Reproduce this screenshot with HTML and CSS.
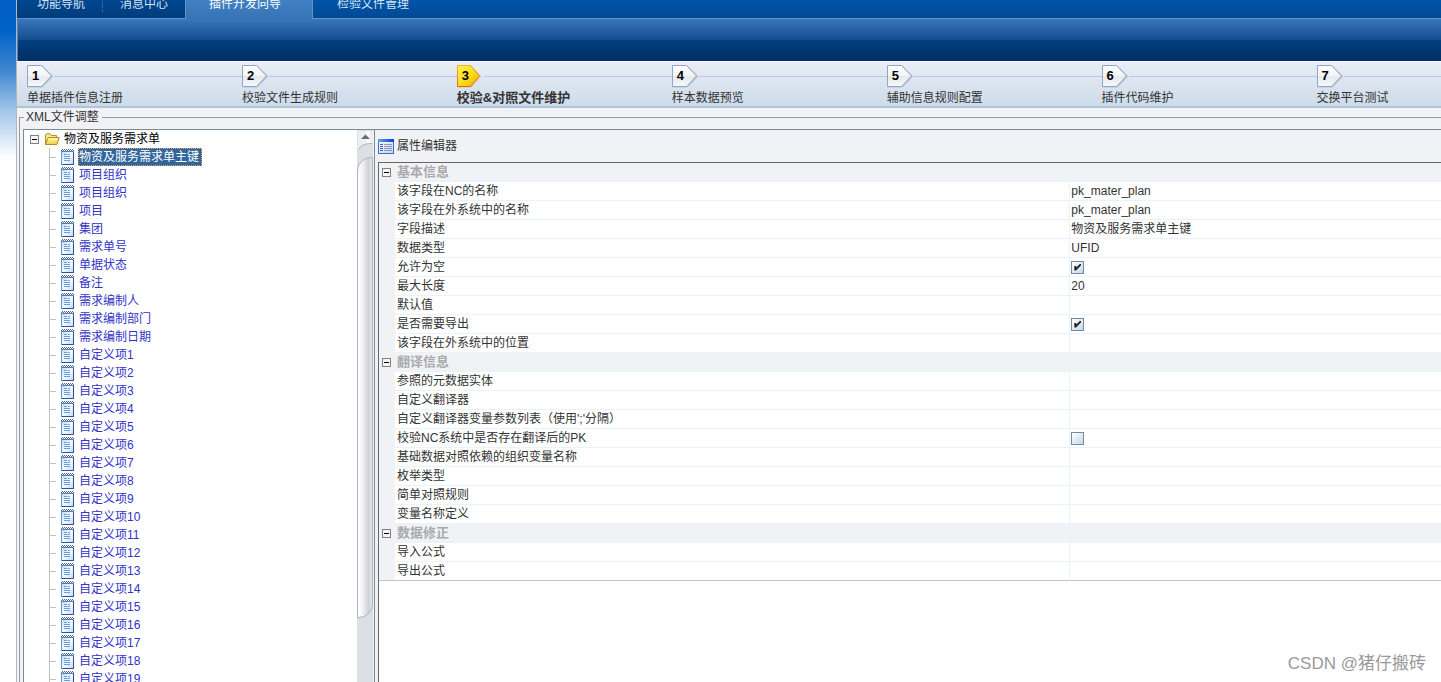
FILE: index.html
```html
<!DOCTYPE html>
<html lang="zh-CN">
<head>
<meta charset="utf-8">
<title>插件开发向导</title>
<link rel="stylesheet" href="styles.css">
</head>
<body>
<svg class="defs" aria-hidden="true">
  <defs>
    <linearGradient id="gGray" x1="0" y1="0" x2="0" y2="1"><stop offset="0" stop-color="#fff"/><stop offset=".48" stop-color="#f4f5f7"/><stop offset=".5" stop-color="#e6e8ea"/><stop offset="1" stop-color="#f6f8fa"/></linearGradient>
    <linearGradient id="gGold" x1="0" y1="0" x2="1" y2="1"><stop offset="0" stop-color="#fff34a"/><stop offset=".5" stop-color="#ffdc1e"/><stop offset="1" stop-color="#f9a800"/></linearGradient>
    <linearGradient id="gGoldEdge" x1="0" y1="0" x2="0" y2="1"><stop offset="0" stop-color="#f0b428"/><stop offset="1" stop-color="#d96a10"/></linearGradient>
    <linearGradient id="gPage" x1="0" y1="0" x2="1" y2="1"><stop offset="0" stop-color="#b8dafa"/><stop offset=".5" stop-color="#f6fbff"/><stop offset="1" stop-color="#b4dcfc"/></linearGradient>
    <linearGradient id="gFolder" x1="0" y1="0" x2="0" y2="1"><stop offset="0" stop-color="#fff6a8"/><stop offset="1" stop-color="#f2cf45"/></linearGradient>
    <linearGradient id="gTitle" x1="0" y1="0" x2="1" y2="0"><stop offset="0" stop-color="#5aa2ff"/><stop offset="1" stop-color="#0a3fd0"/></linearGradient>
    <linearGradient id="gBody" x1="0" y1="0" x2="1" y2="1"><stop offset="0" stop-color="#fff"/><stop offset="1" stop-color="#ccd0e6"/></linearGradient>
  </defs>
  <symbol id="arrow" viewBox="0 0 26 23"><path d="M1.500 1.500H15L25 11.500 15 21.500H1.500Z" fill="none" stroke="#b9c4d2" stroke-width="2"/><path d="M.5 .5H14.500L24.500 11 14.500 21.500H.5Z" fill="url(#gGray)" stroke="#8fa6c4"/></symbol>
  <symbol id="arrow-on" viewBox="0 0 26 23"><path d="M1.500 1.500H14L23 11.500 14 21.500H1.500Z" fill="none" stroke="#d9c9a8" stroke-width="2"/><path d="M.5 .5H13.500L22.500 11 13.500 21.500H.5Z" fill="url(#gGold)" stroke="url(#gGoldEdge)"/></symbol>
  <symbol id="page" viewBox="0 0 13 16">
    <rect x=".5" y="2.500" width="12" height="13" fill="url(#gPage)" stroke="#5f96dc"/>
    <path d="M12.500 3V15.500H1" fill="none" stroke="#3e4d8e"/>
    <path d="M1 .5H13M1 2.500H13" stroke="#4a6a96" stroke-dasharray="1 1"/><path d="M0 1.500H13" stroke="#4a6a96" stroke-dasharray="1 1"/>
    <path d="M3 5.500H6M7 5.500H9M3 7.500H9M3 9.500H9M3 11.500H9" stroke="#6b9bdc"/>
  </symbol>
  <symbol id="folder" viewBox="0 0 16 13">
    <path d="M1.500 11.500V2L2.500 .8H6L7.500 2.500H12.500V5" fill="#fbe98a" stroke="#b98a1c"/>
    <path d="M1.500 11.500 4.300 4.500H15.200L12.800 11.500Z" fill="url(#gFolder)" stroke="#b98a1c"/>
    <path d="M4.800 5.700H13.600" stroke="#fffbd8"/>
  </symbol>
  <symbol id="form" viewBox="0 0 16 15">
    <rect x=".5" y=".5" width="15" height="14" fill="url(#gBody)" stroke="#2f6fe0"/>
    <rect width="16" height="3" fill="url(#gTitle)"/>
    <path d="M2 5.500H5M2 7.500H5M2 9.500H5M2 11.500H5" stroke="#4a5a9c"/>
    <path d="M6 5.500H14M6 7.500H14M6 9.500H14M6 11.500H14" stroke="#8d94b4"/>
  </symbol>
</svg>

<div class="app">
  <div class="rail"></div>
  <main class="main">
    <nav class="tabs">
      <a class="tab" href="#">功能导航</a>
      <a class="tab tab-split" href="#">消息中心</a>
      <a class="tab tab-active" href="#">插件开发向导</a>
      <a class="tab tab-last" href="#">检验文件管理</a>
    </nav>
    <div class="band"></div>
    <ol class="steps">
      <li class="step"><span class="marker"><svg><use href="#arrow"/></svg><b>1</b></span><span class="step-name">单据插件信息注册</span></li>
      <li class="step"><span class="marker"><svg><use href="#arrow"/></svg><b>2</b></span><span class="step-name">校验文件生成规则</span></li>
      <li class="step step-on"><span class="marker"><svg><use href="#arrow-on"/></svg><b>3</b></span><span class="step-name">校验&amp;对照文件维护</span></li>
      <li class="step"><span class="marker"><svg><use href="#arrow"/></svg><b>4</b></span><span class="step-name">样本数据预览</span></li>
      <li class="step"><span class="marker"><svg><use href="#arrow"/></svg><b>5</b></span><span class="step-name">辅助信息规则配置</span></li>
      <li class="step"><span class="marker"><svg><use href="#arrow"/></svg><b>6</b></span><span class="step-name">插件代码维护</span></li>
      <li class="step"><span class="marker"><svg><use href="#arrow"/></svg><b>7</b></span><span class="step-name">交换平台测试</span></li>
    </ol>

    <fieldset class="work">
      <legend>XML文件调整</legend>
      <div class="split">
        <div class="tree-pane">
          <div class="tree">
            <div class="root"><button class="toggle" type="button" aria-label="折叠"></button><svg class="folder"><use href="#folder"/></svg><span>物资及服务需求单</span></div>
            <ul class="nodes">
              <li class="node selected"><svg><use href="#page"/></svg><span>物资及服务需求单主键</span></li>
              <li class="node"><svg><use href="#page"/></svg><span>项目组织</span></li>
              <li class="node"><svg><use href="#page"/></svg><span>项目组织</span></li>
              <li class="node"><svg><use href="#page"/></svg><span>项目</span></li>
              <li class="node"><svg><use href="#page"/></svg><span>集团</span></li>
              <li class="node"><svg><use href="#page"/></svg><span>需求单号</span></li>
              <li class="node"><svg><use href="#page"/></svg><span>单据状态</span></li>
              <li class="node"><svg><use href="#page"/></svg><span>备注</span></li>
              <li class="node"><svg><use href="#page"/></svg><span>需求编制人</span></li>
              <li class="node"><svg><use href="#page"/></svg><span>需求编制部门</span></li>
              <li class="node"><svg><use href="#page"/></svg><span>需求编制日期</span></li>
              <li class="node"><svg><use href="#page"/></svg><span>自定义项1</span></li>
              <li class="node"><svg><use href="#page"/></svg><span>自定义项2</span></li>
              <li class="node"><svg><use href="#page"/></svg><span>自定义项3</span></li>
              <li class="node"><svg><use href="#page"/></svg><span>自定义项4</span></li>
              <li class="node"><svg><use href="#page"/></svg><span>自定义项5</span></li>
              <li class="node"><svg><use href="#page"/></svg><span>自定义项6</span></li>
              <li class="node"><svg><use href="#page"/></svg><span>自定义项7</span></li>
              <li class="node"><svg><use href="#page"/></svg><span>自定义项8</span></li>
              <li class="node"><svg><use href="#page"/></svg><span>自定义项9</span></li>
              <li class="node"><svg><use href="#page"/></svg><span>自定义项10</span></li>
              <li class="node"><svg><use href="#page"/></svg><span>自定义项11</span></li>
              <li class="node"><svg><use href="#page"/></svg><span>自定义项12</span></li>
              <li class="node"><svg><use href="#page"/></svg><span>自定义项13</span></li>
              <li class="node"><svg><use href="#page"/></svg><span>自定义项14</span></li>
              <li class="node"><svg><use href="#page"/></svg><span>自定义项15</span></li>
              <li class="node"><svg><use href="#page"/></svg><span>自定义项16</span></li>
              <li class="node"><svg><use href="#page"/></svg><span>自定义项17</span></li>
              <li class="node"><svg><use href="#page"/></svg><span>自定义项18</span></li>
              <li class="node"><svg><use href="#page"/></svg><span>自定义项19</span></li>
            </ul>
          </div>
          <div class="scroll">
            <svg class="scroll-up" viewBox="0 0 16 27">
              <path d="M1 1H16V13C8 13 4 15 1 20Z" fill="#eceef1"/>
              <path d="M9 1H13V13H9Z" fill="#f8f9fa"/>
              <path d="M2 19.500C4 15 8 13.500 15 13.500" fill="none" stroke="#b2b5ba"/>
              <path d="M4 9 8.500 4.500 13 9Z" fill="#6a6c70"/>
            </svg>
            <div class="thumb"></div>
          </div>
        </div>

        <section class="editor">
          <h2 class="editor-title"><svg><use href="#form"/></svg>属性编辑器</h2>
          <div class="sheet">
            <table class="props">
              <colgroup><col class="c-gutter"><col class="c-name"><col></colgroup>
              <tbody>
                <tr class="group"><td><button class="toggle" type="button" aria-label="折叠"></button></td><th>基本信息</th><td></td></tr>
                <tr><td></td><th>该字段在NC的名称</th><td>pk_mater_plan</td></tr>
                <tr><td></td><th>该字段在外系统中的名称</th><td>pk_mater_plan</td></tr>
                <tr><td></td><th>字段描述</th><td>物资及服务需求单主键</td></tr>
                <tr><td></td><th>数据类型</th><td>UFID</td></tr>
                <tr><td></td><th><label for="nullable">允许为空</label></th><td><input id="nullable" type="checkbox" checked></td></tr>
                <tr><td></td><th>最大长度</th><td>20</td></tr>
                <tr><td></td><th>默认值</th><td></td></tr>
                <tr><td></td><th><label for="export">是否需要导出</label></th><td><input id="export" type="checkbox" checked></td></tr>
                <tr><td></td><th>该字段在外系统中的位置</th><td></td></tr>
                <tr class="group"><td><button class="toggle" type="button" aria-label="折叠"></button></td><th>翻译信息</th><td></td></tr>
                <tr><td></td><th>参照的元数据实体</th><td></td></tr>
                <tr><td></td><th>自定义翻译器</th><td></td></tr>
                <tr><td></td><th>自定义翻译器变量参数列表（使用';'分隔）</th><td></td></tr>
                <tr><td></td><th><label for="verify">校验NC系统中是否存在翻译后的PK</label></th><td><input id="verify" type="checkbox"></td></tr>
                <tr><td></td><th>基础数据对照依赖的组织变量名称</th><td></td></tr>
                <tr><td></td><th>枚举类型</th><td></td></tr>
                <tr><td></td><th>简单对照规则</th><td></td></tr>
                <tr><td></td><th>变量名称定义</th><td></td></tr>
                <tr class="group"><td><button class="toggle" type="button" aria-label="折叠"></button></td><th>数据修正</th><td></td></tr>
                <tr><td></td><th>导入公式</th><td></td></tr>
                <tr class="last"><td></td><th>导出公式</th><td></td></tr>
              </tbody>
            </table>
          </div>
        </section>
      </div>
    </fieldset>
  </main>
  <div class="watermark">CSDN @猪仔搬砖</div>
</div>
</body>
</html>
```
FILE: styles.css
```css
* { box-sizing: border-box; }

body {
  margin: 0;
  font: 12px/18px "Liberation Sans", "Noto Sans CJK SC", sans-serif;
  color: #333;
}

svg { display: block; flex: none; }
.defs { position: absolute; width: 0; height: 0; }

.app {
  position: relative;
  display: flex;
  height: 100vh;
  overflow: hidden;
}

.rail {
  flex: none;
  width: 17px;
  border-right: 1px solid #b4b6ba;
  background: linear-gradient(#005fc4 0, #0061c6 30px, #3f86d0 70px, #a5c8ea 112px, #fff 158px);
}

.main {
  flex: 1;
  min-width: 0;
  display: flex;
  flex-direction: column;
  background: #f1f2f6;
}

/* Top navigation */
.tabs {
  display: flex;
  flex: none;
  align-items: flex-end;
  height: 19px;
  overflow: hidden;
  background: #3a77bb;
}

.tab {
  flex: none;
  padding: 0 17px 4px 20px;
  line-height: 20px;
  color: #d3e4f6;
  text-decoration: none;
  background: linear-gradient(#004a96, #003c7c);
  border-bottom: 1px solid #5f93cc;
}

.tab-split {
  padding-right: 17px;
  padding-left: 18px;
  border-right: 1px solid #5f93cc;
}

.tab-split::before {
  content: "";
  float: left;
  width: 0;
  height: 18px;
  margin-left: -18px;
  border-left: 1px dotted #5585b8;
}

.tab-active {
  padding: 0 31px 5px 23px;
  color: #fff;
  background: linear-gradient(#4585c8, #3673b5);
  border: 0;
}

.tab-last {
  flex: 1;
  padding-left: 24px;
  border-left: 1px solid #5f93cc;
  background: linear-gradient(#0057ae, #004a94);
}

.band {
  flex: none;
  height: 42px;
  border-left: 1px solid #4a83c0;
  background: linear-gradient(#3977ba 0, #134d8e 21px, #003f80 21px, #002f64 42px);
}

/* Wizard steps */
.steps {
  display: flex;
  flex: none;
  margin: 0;
  padding: 3px 0 0 10px;
  height: 47px;
  list-style: none;
  overflow: hidden;
  background: linear-gradient(#e9eef6, #cddbe9);
  border-top: 1px solid #f6f8fb;
  border-bottom: 2px solid #afc5dc;
}

.step { flex: 0 0 15.2%; }

.marker {
  position: relative;
  display: flex;
  align-items: center;
  height: 23px;
  margin-bottom: 1px;
  color: #000;
}

.marker svg { width: 26px; height: 23px; }

.marker::after {
  content: "";
  flex: 1;
  height: 1px;
  margin-left: 1px;
  background: #b5cae0;
}

.marker b {
  position: absolute;
  left: 5px;
  top: 2px;
  font-size: 13px;
}

.step-name { display: block; line-height: 18px; white-space: nowrap; }
.step-on .step-name { font-weight: bold; font-size: 13px; }

/* Work area */
.work {
  flex: 1;
  min-width: 0;
  min-height: 0;
  display: flex;
  flex-direction: column;
  margin: 0 0 0 2px;
  padding: 3px 0 0 3px;
  border: solid #999;
  border-width: 1px 0 0 1px;
}

.work legend { padding: 0 3px 0 2px; margin-left: 1px; line-height: 18px; }

.split {
  flex: 1;
  display: flex;
  min-height: 0;
  border-top: 1px solid #7d8a99;
}

.tree-pane {
  flex: none;
  display: flex;
  width: 352px;
  padding-right: 1px;
  border: solid #7d8a99;
  border-width: 0 1px;
  overflow: hidden;
}

.tree { flex: 1; background: #fff; white-space: nowrap; }

.root {
  display: flex;
  align-items: center;
  height: 18px;
  padding-left: 6px;
  color: #000;
}

.folder { width: 16px; height: 13px; margin: 0 4px 0 5px; }

.toggle {
  display: block;
  flex: none;
  width: 9px;
  height: 9px;
  padding: 0;
  border: 1px solid #808080;
  background: linear-gradient(#000, #000) center / 5px 1px no-repeat #f4f4f4;
}

.nodes {
  margin: 0 0 0 25px;
  padding: 0;
  list-style: none;
  border-left: 1px solid #c0c0c0;
}

.node {
  display: flex;
  align-items: center;
  height: 18px;
  color: #3232c8;
}

.node::before {
  content: "";
  width: 6px;
  height: 1px;
  margin-right: 5px;
  background: #c0c0c0;
}

.node svg { width: 13px; height: 16px; }
.node span { margin-left: 4px; padding: 0 1px; line-height: 18px; }

.selected span {
  padding: 0 2px 0 0;
  line-height: 16px;
  color: #fff;
  background: #31669c;
  border: 1px dotted #e8a060;
}

.scroll {
  flex: none;
  display: flex;
  flex-direction: column;
  width: 16px;
  background: #dcdfe4;
}

.scroll-up { width: 16px; height: 27px; }

.thumb {
  height: 83.5%;
  border: 1px solid #b0b2b8;
  border-radius: 14px 0 14px 0;
  background: linear-gradient(90deg, #fff 0, #f4f4f6 30%, #cfd1d5 75%, #e6e7e9 100%);
}

/* Property editor */
.editor {
  flex: 1;
  min-width: 0;
  display: flex;
  flex-direction: column;
  padding-left: 3px;
}

.editor-title {
  display: flex;
  flex: none;
  align-items: center;
  gap: 3px;
  height: 32px;
  margin: 0;
  font-size: 12px;
  font-weight: normal;
}

.editor-title svg { width: 16px; height: 15px; }

.sheet {
  flex: 1;
  min-height: 0;
  overflow: hidden;
  border: solid #666;
  border-width: 1px 0 0 1px;
  background: #fff;
}

.props {
  width: 100%;
  table-layout: fixed;
  border-collapse: separate;
  border-spacing: 0;
}

.c-gutter { width: 16px; }
.c-name { width: 63.5%; }

.props td,
.props th {
  height: 19px;
  padding: 0 0 0 2px;
  font-weight: normal;
  line-height: 18px;
  text-align: left;
  white-space: nowrap;
  border-bottom: 1px solid #e8f4fb;
}

.props td:first-child {
  padding-left: 3px;
  background: #f1f2f6;
  border-bottom-color: #f1f2f6;
}

.props td:last-child { padding-left: 1px; border-left: 1px solid #e8f4fb; }
.props .group > * { background: #f1f2f6; }
.props .group th { font-weight: bold; font-size: 13px; color: #aaa; }
.props .last > *,
.props .last > td:first-child { border-bottom-color: #c4c4c4; }

.props input {
  display: block;
  appearance: none;
  width: 13px;
  height: 13px;
  margin: 0;
  border: 1px solid #7a8a9c;
  background: linear-gradient(135deg, #fff, #c4d6ea);
}

.props input:checked::before {
  content: "";
  display: block;
  width: 7px;
  height: 7px;
  margin: 2px;
  background: #222;
  clip-path: polygon(0 35%, 28% 35%, 28% 58%, 85% 0, 100% 0, 100% 22%, 25% 100%, 0 100%);
}

.watermark {
  position: absolute;
  right: 15px;
  bottom: 6px;
  font-size: 17px;
  line-height: 24px;
  color: #999;
}
```
